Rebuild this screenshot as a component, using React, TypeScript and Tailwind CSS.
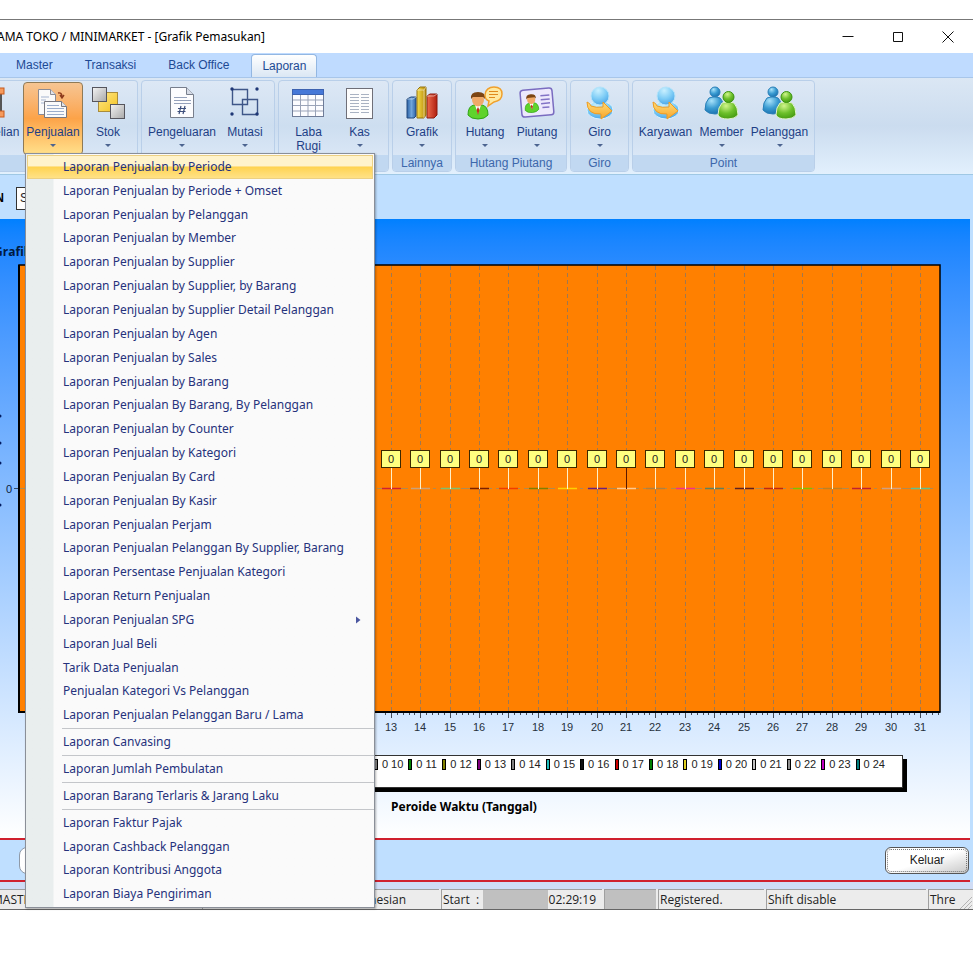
import type { ReactNode } from "react";
import clsx from "clsx";

const TABS = ["Master", "Transaksi", "Back Office"];

const MENU_SECTIONS = [
  [
    "Laporan Penjualan by Periode",
    "Laporan Penjualan by Periode + Omset",
    "Laporan Penjualan by Pelanggan",
    "Laporan Penjualan by Member",
    "Laporan Penjualan by Supplier",
    "Laporan Penjualan by Supplier, by Barang",
    "Laporan Penjualan by Supplier Detail Pelanggan",
    "Laporan Penjualan by Agen",
    "Laporan Penjualan by Sales",
    "Laporan Penjualan by Barang",
    "Laporan Penjualan By Barang, By Pelanggan",
    "Laporan Penjualan by Counter",
    "Laporan Penjualan by Kategori",
    "Laporan Penjualan By Card",
    "Laporan Penjualan By Kasir",
    "Laporan Penjualan Perjam",
    "Laporan Penjualan Pelanggan By Supplier, Barang",
    "Laporan Persentase Penjualan Kategori",
    "Laporan Return Penjualan",
    "Laporan Penjualan SPG",
    "Laporan Jual Beli",
    "Tarik Data Penjualan",
    "Penjualan Kategori Vs Pelanggan",
    "Laporan Penjualan Pelanggan Baru / Lama",
  ],
  ["Laporan Canvasing"],
  ["Laporan Jumlah Pembulatan"],
  ["Laporan Barang Terlaris & Jarang Laku"],
  [
    "Laporan Faktur Pajak",
    "Laporan Cashback Pelanggan",
    "Laporan Kontribusi Anggota",
    "Laporan Biaya Pengiriman",
  ],
];

const DAYS = Array.from({ length: 19 }, (_, i) => i + 13);
const DAY_COLORS = [
  "#d02030", "#c9a27a", "#7fc070", "#7a2000", "#f03c00", "#7f8000", "#ffd000",
  "#6a2080", "#ffc890", "#b08040", "#f0308c", "#5f8060", "#602020", "#c02810",
  "#80c000", "#c08020", "#c02030", "#d0a080", "#60c090",
];

const LEGEND = [
  { day: 10, color: "#808080" },
  { day: 11, color: "#008000" },
  { day: 12, color: "#808000" },
  { day: 13, color: "#800080" },
  { day: 14, color: "#808080" },
  { day: 15, color: "#20c0c0" },
  { day: 16, color: "#101010" },
  { day: 17, color: "#d00000" },
  { day: 18, color: "#008000" },
  { day: 19, color: "#e0d020" },
  { day: 20, color: "#0000d0" },
  { day: 21, color: "#c0c0c0" },
  { day: 22, color: "#909090" },
  { day: 23, color: "#c000c0" },
  { day: 24, color: "#008080" },
];

function Icon({ children }: { children: ReactNode }) {
  return (
    <svg width="36" height="36" viewBox="0 0 36 36" className="shrink-0" aria-hidden="true">
      {children}
    </svg>
  );
}

function Defs() {
  return (
    <svg width="0" height="0" className="absolute" aria-hidden="true">
      <defs>
        <linearGradient id="silver" x1="0" y1="0" x2="1" y2="1">
          <stop offset="0" stopColor="#f4f4f4" />
          <stop offset="1" stopColor="#a8a8a8" />
        </linearGradient>
        <linearGradient id="gold" x1="0" y1="0" x2="1" y2="1">
          <stop offset="0" stopColor="#ffe88a" />
          <stop offset="1" stopColor="#f3c21e" />
        </linearGradient>
        <linearGradient id="arrow" x1="0" y1="0" x2="0" y2="1">
          <stop offset="0" stopColor="#ffdc78" />
          <stop offset="1" stopColor="#f7a428" />
        </linearGradient>
        <radialGradient id="sky" cx="0.4" cy="0.2" r="0.9">
          <stop offset="0" stopColor="#c9f0ff" />
          <stop offset="0.5" stopColor="#7fcdf6" />
          <stop offset="1" stopColor="#3f9ce4" />
        </radialGradient>
        <radialGradient id="blue" cx="0.35" cy="0.25" r="0.85">
          <stop offset="0" stopColor="#a8e2fa" />
          <stop offset="0.5" stopColor="#3a9cd2" />
          <stop offset="1" stopColor="#1568a8" />
        </radialGradient>
        <radialGradient id="green" cx="0.4" cy="0.25" r="0.85">
          <stop offset="0" stopColor="#d2f58c" />
          <stop offset="0.5" stopColor="#6cc02a" />
          <stop offset="1" stopColor="#3c920c" />
        </radialGradient>
        <linearGradient id="barBlue">
          <stop offset="0" stopColor="#2d63a6" />
          <stop offset="0.5" stopColor="#6fa5dc" />
          <stop offset="1" stopColor="#2d63a6" />
        </linearGradient>
        <linearGradient id="barGold">
          <stop offset="0" stopColor="#f5dc4a" />
          <stop offset="1" stopColor="#b88a08" />
        </linearGradient>
        <linearGradient id="barRed">
          <stop offset="0" stopColor="#ee6a4c" />
          <stop offset="1" stopColor="#b01f10" />
        </linearGradient>
      </defs>
    </svg>
  );
}

function PurchaseIcon() {
  return (
    <Icon>
      <path d="M12 6h18M12 29h18M16 6v23M28 6v23" stroke="#555" strokeWidth="2" fill="none" />
      <rect x="25" y="3" width="6" height="6" fill="#f59a5c" stroke="#c85a1c" />
      <rect x="25" y="26" width="6" height="6" fill="#f59a5c" stroke="#c85a1c" />
    </Icon>
  );
}

function SalesIcon() {
  return (
    <Icon>
      <path d="M3.500 4.500h12l5 5v20h-17z" fill="#fafafa" stroke="#8b8b94" />
      <path d="M15.500 4.500v5h5" fill="#dfe3ea" stroke="#8b8b94" />
      <path d="M6 12h8M6 15h5M6 18h3" stroke="#a5b4cf" />
      <path d="M9.500 16.500h17l5 5v11h-22z" fill="#fafafa" stroke="#77777f" />
      <path d="M26.500 16.500v5h5" fill="#dfe3ea" stroke="#77777f" />
      <path d="M12 20.500h12M12 23.500h17M12 26.500h17M12 29.500h17" stroke="#9badcb" />
      <path d="M23 8q4-1 4 4m-2-2l2 3 2-3" fill="none" stroke="#8d3a1c" strokeWidth="1.400" />
    </Icon>
  );
}

function StockIcon() {
  return (
    <Icon>
      <rect x="8.500" y="7.500" width="19" height="19" fill="url(#gold)" stroke="#a98c3c" />
      <rect x="2.500" y="2.500" width="14" height="14" fill="url(#silver)" stroke="#55555d" />
      <rect x="20.500" y="19.500" width="14" height="14" fill="url(#silver)" stroke="#55555d" />
    </Icon>
  );
}

function ExpenseIcon() {
  return (
    <Icon>
      <path d="M6.500 2.500h16l7 7v23h-23z" fill="#fcfcfe" stroke="#777e8c" />
      <path d="M22.500 2.500v7h7" fill="#d6dbe6" stroke="#777e8c" />
      <path d="M10 12.500h13M10 15.500h17M10 18.500h17" stroke="#95a1bb" />
      <path d="M17 21l-2 8M21 21l-2 8M14 23.500h8M13.500 26.500h8" stroke="#3d4f7c" strokeWidth="1.200" />
    </Icon>
  );
}

function MutationIcon() {
  return (
    <Icon>
      <path d="M5.500 4.500h15v15h-15zM15.500 14.500h15v15h-15z" fill="none" stroke="#3e5688" strokeWidth="1.400" />
      <g fill="#1f3776">
        <circle cx="5" cy="4" r="1.700" />
        <circle cx="30" cy="4" r="1.700" />
        <circle cx="5" cy="29" r="1.700" />
        <circle cx="30" cy="29" r="1.700" />
      </g>
    </Icon>
  );
}

function TableIcon() {
  return (
    <Icon>
      <rect x="1.500" y="4.500" width="31" height="27" fill="#fcfcff" stroke="#6f7c98" />
      <rect x="1.500" y="4.500" width="31" height="5" fill="#4678d8" stroke="#3c62b0" />
      <path d="M2 15h30M2 20.500h30M2 26h30M9.500 10v21M17 10v21M24.500 10v21" stroke="#9aa3b8" />
    </Icon>
  );
}

function CashIcon() {
  return (
    <Icon>
      <rect x="4.500" y="3.500" width="26" height="30" fill="#fdfdfd" stroke="#6f6f78" />
      <path
        d="M8 9.500h9M8 12.500h9M8 15.500h9M8 18.500h9M8 21.500h9M8 24.500h9M8 27.500h9M19 9.500h8M19 12.500h8M19 15.500h8M19 18.500h8M19 21.500h8M19 24.500h8M19 27.500h8"
        stroke="#a9b2c2"
      />
    </Icon>
  );
}

function ChartIcon() {
  return (
    <Icon>
      <path d="M3 14l4-2h5v19l-2 2H3z" fill="url(#barBlue)" stroke="#23497c" />
      <path d="M23 11l3-2h7v21l-3 3h-7z" fill="url(#barRed)" stroke="#8a1a0e" />
      <path d="M13 5l3-3h6v28l-2 3h-7z" fill="url(#barGold)" stroke="#93710c" />
      <path d="M13 5h7l2-3M20 5v28M3 14h6l3-2M23 11h7l3-2" fill="none" stroke="#fff" strokeOpacity="0.5" />
    </Icon>
  );
}

function Person() {
  return (
    <>
      <path d="M1 30q0-9 6-10h8q6 1 6 10-3 4-10 4T1 30z" fill="#5fd32c" stroke="#2fa414" />
      <path d="M8 20l3 9 3-9z" fill="#fff" />
      <path d="M11 22l-1.500 3L11 30l1.500-5z" fill="#c22a1c" />
      <ellipse cx="11" cy="15" rx="6" ry="6.500" fill="#f0a968" />
      <path d="M4 14q-1-7 7-7t7 7l-2-2H6z" fill="#7c4513" />
    </>
  );
}

function DebtIcon() {
  return (
    <Icon>
      <Person />
      <path
        d="M27 2c5 0 8 2 8 7 0 4-3 7-8 8l-6 4 1-5c-3-1-4-3-4-6 0-5 4-8 9-8z"
        fill="#ffe9a0"
        stroke="#f0a02c"
        strokeWidth="1.500"
      />
      <path d="M22 6.500h9M22 9.500h9M22 12.500h6" stroke="#e08a1c" />
    </Icon>
  );
}

function ReceivableIcon() {
  return (
    <Icon>
      <g transform="rotate(-5 18 18)">
        <rect x="2" y="4" width="32" height="27" rx="3" fill="#ece9fc" stroke="#7a6cc0" strokeWidth="1.500" />
        <g transform="translate(5 4) scale(0.680)">
          <Person />
        </g>
        <path d="M22 11h9M22 15h9M22 19h9M23 23h7" stroke="#8274c6" strokeWidth="1.500" />
      </g>
    </Icon>
  );
}

function ExchangeIcon() {
  return (
    <Icon>
      <ellipse cx="18" cy="25" rx="13" ry="9" fill="url(#sky)" stroke="#d8f1ff" />
      <circle cx="18" cy="11" r="9" fill="url(#sky)" stroke="#b4e3fa" />
      <path
        d="M5 17q3 1 4 4 5 2 12 1v-5l9 9-11 8v-5Q5 30 5 17z"
        fill="url(#arrow)"
        stroke="#ee9c24"
        strokeLinejoin="round"
      />
    </Icon>
  );
}

function MembersIcon() {
  return (
    <Icon>
      <path d="M1 25q0-8 4-12 6-3 11 0 4 4 4 13-3 3-9 3-7 0-10-4z" fill="url(#blue)" stroke="#2a80b8" />
      <circle cx="11" cy="7" r="5" fill="url(#blue)" stroke="#2a80b8" />
      <path d="M14 30q0-8 4-12 6-3 12 0 4 4 4 12-3 4-10 4-8 0-10-4z" fill="url(#green)" stroke="#e0f2cc" />
      <circle cx="24.500" cy="12" r="5.500" fill="url(#green)" stroke="#3c9410" />
    </Icon>
  );
}

type RibbonButtonProps = {
  label: string;
  width: string;
  icon: ReactNode;
  active?: boolean;
  arrow?: boolean;
};

function RibbonButton({ label, width, icon, active, arrow = true }: RibbonButtonProps) {
  return (
    <button
      className={clsx(
        "flex shrink-0 flex-col items-center rounded-sm border pt-[2px] text-xs leading-[14px] text-[#1e3f86]",
        width,
        active
          ? "border-[#8f7a56] bg-linear-to-b from-[#f6c592] via-[#fca348] to-[#ffe08a]"
          : "border-transparent",
      )}
    >
      {icon}
      <span className="mt-[4px]">{label}</span>
      {arrow && (
        <svg width="6" height="4" viewBox="0 0 6 4" className="mt-[5px]" aria-hidden="true">
          <path d="M0 0h6L3 3z" fill="#4c6490" />
        </svg>
      )}
    </button>
  );
}

type RibbonGroupProps = { title?: string; width: string; end?: boolean; children: ReactNode };

function RibbonGroup({ title, width, end, children }: RibbonGroupProps) {
  return (
    <div
      className={clsx(
        "flex h-[92px] shrink-0 flex-col overflow-hidden border border-[#b9cfe9] bg-linear-to-b from-[#dde8f5] via-[#cddef0] to-[#e0ebf9]",
        end ? "rounded-r-sm border-l-0" : "rounded-sm",
        width,
      )}
    >
      <div className={clsx("flex min-h-0 flex-1 pt-px", end ? "justify-end pr-1" : "justify-center")}>
        {children}
      </div>
      <div className="h-4 bg-[#c1d8f1] text-center text-xs leading-4 text-[#3c67ab]">{title}</div>
    </div>
  );
}

function Ribbon() {
  return (
    <div className="flex h-[98px] gap-[3px] overflow-hidden border-y border-t-[#a8c6ea] border-b-[#9fc8e4] bg-linear-to-b from-[#dbe7f4] via-[#cbdcef] to-[#e2f0fd] pt-[2px]">
      <RibbonGroup width="w-[138px]" end>
        <RibbonButton label="Pembelian" width="w-[64px]" icon={<PurchaseIcon />} />
        <RibbonButton label="Penjualan" width="w-[60px]" icon={<SalesIcon />} active />
        <RibbonButton label="Stok" width="w-[50px]" icon={<StockIcon />} />
      </RibbonGroup>
      <RibbonGroup width="w-[134px]">
        <RibbonButton label="Pengeluaran" width="w-[74px]" icon={<ExpenseIcon />} />
        <RibbonButton label="Mutasi" width="w-[52px]" icon={<MutationIcon />} />
      </RibbonGroup>
      <RibbonGroup width="w-[111px]">
        <RibbonButton label="Laba Rugi" width="w-[52px]" icon={<TableIcon />} arrow={false} />
        <RibbonButton label="Kas" width="w-[50px]" icon={<CashIcon />} />
      </RibbonGroup>
      <RibbonGroup title="Lainnya" width="w-[60px]">
        <RibbonButton label="Grafik" width="w-[52px]" icon={<ChartIcon />} />
      </RibbonGroup>
      <RibbonGroup title="Hutang Piutang" width="w-[112px]">
        <RibbonButton label="Hutang" width="w-[52px]" icon={<DebtIcon />} />
        <RibbonButton label="Piutang" width="w-[52px]" icon={<ReceivableIcon />} />
      </RibbonGroup>
      <RibbonGroup title="Giro" width="w-[59px]">
        <RibbonButton label="Giro" width="w-[52px]" icon={<ExchangeIcon />} />
      </RibbonGroup>
      <RibbonGroup title="Point" width="w-[183px]">
        <RibbonButton label="Karyawan" width="w-[58px]" icon={<ExchangeIcon />} arrow={false} />
        <RibbonButton label="Member" width="w-[54px]" icon={<MembersIcon />} />
        <RibbonButton label="Pelanggan" width="w-[62px]" icon={<MembersIcon />} />
      </RibbonGroup>
    </div>
  );
}

function TitleBar() {
  return (
    <header className="flex h-[33px] items-center justify-between bg-white font-['Noto_Sans',sans-serif]">
      <h1 className="-ml-[3px] text-xs whitespace-nowrap text-black">
        AMA TOKO / MINIMARKET - [Grafik Pemasukan]
      </h1>
      <div className="flex shrink-0">
        <button aria-label="Minimize" className="flex h-8 w-[50px] items-center justify-center">
          <svg width="12" height="12" viewBox="0 0 12 12">
            <path d="M0.500 5.500h11" stroke="#111" />
          </svg>
        </button>
        <button aria-label="Maximize" className="flex h-8 w-[50px] items-center justify-center">
          <svg width="12" height="12" viewBox="0 0 12 12">
            <path d="M1.500 1.500h9v9h-9z" fill="none" stroke="#111" />
          </svg>
        </button>
        <button aria-label="Close" className="flex h-8 w-[50px] items-center justify-center">
          <svg width="12" height="12" viewBox="0 0 12 12">
            <path d="M0.500 0.500l11 11M11.500 0.500l-11 11" stroke="#111" />
          </svg>
        </button>
      </div>
    </header>
  );
}

function ReportMenu() {
  return (
    <div
      role="menu"
      className="absolute top-[153px] left-[25px] flex h-[755px] w-[350px] flex-col border border-[#8a8f98] bg-[#fafafa] bg-linear-to-r from-[#e9eeee] from-[27px] to-[#fafafa] to-[28px] py-px font-['Noto_Sans',sans-serif] shadow-[1px_1px_2px_rgba(0,0,0,0.3)]"
    >
      {MENU_SECTIONS.map((section, index) => (
        <div key={section[0]} className="contents">
          {index > 0 && (
            <div role="separator" className="ml-9 flex h-[3px] items-center">
              <div className="h-px w-full bg-[#c4c6ca]" />
            </div>
          )}
          {section.map((label, i) => (
            <button
              key={label}
              role="menuitem"
              className={clsx(
                "mx-px flex min-h-0 flex-1 items-center justify-between pr-3 pl-9 text-left text-xs leading-4 whitespace-nowrap text-[#26327c]",
                index === 0 &&
                  i === 0 &&
                  "bg-linear-to-b from-[#fff3cb] from-45% via-[#ffd34e] via-50% to-[#ffe38a] shadow-[inset_0_0_0_1px_#ecd083]",
              )}
            >
              {label}
              {label === "Laporan Penjualan SPG" && (
                <svg width="5" height="8" viewBox="0 0 5 8" aria-hidden="true">
                  <path d="M0 0.500L4.500 4 0 7.500z" fill="#4b57a0" />
                </svg>
              )}
            </button>
          ))}
        </div>
      ))}
    </div>
  );
}

const dayX = (day: number) => Math.round(38 + (day - 1) * 29.4);

function Plot() {
  return (
    <svg viewBox="0 0 970 522" className="block w-full" fontFamily="'Liberation Sans', sans-serif" fontSize="11">
      <text x="-6" y="37" fontSize="12" fontWeight="bold" fontFamily="'Open Sans', sans-serif" fill="#001a40">
        Grafik
      </text>
      <g fill="#001a60">
        <circle cx="0" cy="197" r="1.500" />
        <circle cx="0" cy="224" r="1.500" />
        <circle cx="0" cy="244" r="1.500" />
        <circle cx="0" cy="286" r="1.500" />
      </g>
      <text x="6" y="274" fill="#0b2242">
        0
      </text>
      <path d="M14 269.500h5" stroke="#334a66" />
      <rect x="19" y="46" width="921" height="447" fill="#ff8000" stroke="#000" strokeWidth="1.500" />
      <path d="M19 46v447h921" fill="none" stroke="#000" strokeWidth="2" />
      <path d="M20 269.500h917" stroke="#b08a50" strokeDasharray="10 4 3 4" />
      {DAYS.map((day, i) => {
        const x = dayX(day);
        return (
          <g key={day}>
            <path d={`M${x + 0.5} 47v445`} stroke="#a07850" strokeDasharray="4 3" />
            <path d={`M${x - 9} 269.500h19`} stroke={DAY_COLORS[i]} strokeWidth="1.500" />
            <path d={`M${x + 0.5} 249v21`} stroke={day === 21 ? "#5a1800" : "#fff0c8"} />
            <rect x={x - 9.5} y="231.500" width="19" height="17" fill="#ffff80" stroke="#3c2800" />
            <text x={x} y="244" textAnchor="middle" fill="#222">
              0
            </text>
            <path
              d={`M${x + 0.5} 494v5M${x + 6.5} 494v2M${x + 12.5} 494v2M${x + 18.5} 494v2M${x - 5.5} 494v2`}
              stroke="#444c58"
            />
            <text x={x} y="512" textAnchor="middle" fill="#26303c">
              {day}
            </text>
          </g>
        );
      })}
    </svg>
  );
}

function ChartPanel() {
  return (
    <section className="mr-[3px] flex h-[619px] flex-col overflow-hidden bg-linear-to-b from-[#0080ff] to-white">
      <Plot />
      <ul className="mt-[14px] mr-[67px] ml-[60px] flex h-[33px] justify-end border border-[#333] bg-white pt-[2px] pr-3 text-[11px] leading-3 text-[#222] shadow-[4px_4px_0_#000]">
        {LEGEND.map((entry) => (
          <li key={entry.day} className="flex min-w-[34px] flex-none gap-1 pr-[5px] whitespace-nowrap">
            <span className="mt-px h-[11px] w-1 shrink-0 border border-black" style={{ background: entry.color }} />
            0 {entry.day}
          </li>
        ))}
      </ul>
      <p className="mt-[11px] pr-[42px] text-center font-['Noto_Sans',sans-serif] text-xs leading-4 font-bold text-black">
        Peroide Waktu (Tanggal)
      </p>
    </section>
  );
}

function StatusCell({ className, children }: { className?: string; children?: ReactNode }) {
  return (
    <div
      className={clsx(
        "flex shrink-0 items-center overflow-hidden border-t border-l border-[#a0a0a0] px-px whitespace-nowrap",
        className,
      )}
    >
      {children}
    </div>
  );
}

function StatusBar() {
  return (
    <footer className="flex h-[21px] gap-[2px] overflow-hidden border-b border-[#666] bg-[#ececec] font-['Open_Sans',sans-serif] text-xs text-[#222]">
      <StatusCell className="w-[200px] border-l-0">
        <span className="-ml-[9px]">MASTER</span>
      </StatusCell>
      <StatusCell className="w-[237px] justify-end pr-[33px]">Indonesian</StatusCell>
      <StatusCell className="w-[161px] justify-between pr-[6px]">
        <span className="w-10">Start&nbsp; :</span>
        <span className="mr-px h-full flex-1 bg-[#c0c0c0]" />
        02:29:19
      </StatusCell>
      <StatusCell className="w-[52px] bg-[#c0c0c0]" />
      <StatusCell className="w-[106px]">Registered.</StatusCell>
      <StatusCell className="w-[160px]">Shift disable</StatusCell>
      <StatusCell className="min-w-0 flex-1 shrink justify-between">
        Thre
        <svg width="12" height="12" viewBox="0 0 12 12" className="shrink-0 self-end" aria-hidden="true">
          <path d="M0 12L12 0M4 12l8-8M8 12l4-4" stroke="#b4b4b4" />
        </svg>
      </StatusCell>
    </footer>
  );
}

export default function App() {
  return (
    <div className="relative min-h-screen overflow-hidden bg-white pt-[19px] font-['Liberation_Sans',sans-serif]">
      <Defs />
      <div className="border-t border-[#777] bg-[#bfdfff]">
        <TitleBar />
        <nav className="flex h-[24px] items-end bg-[#bfdbff] text-xs text-[#1e4a94]">
          {TABS.map((tab) => (
            <button key={tab} className="h-6 px-4">
              {tab}
            </button>
          ))}
          <button className="ml-[6px] h-[23px] rounded-t-sm border border-b-0 border-[#93b7e2] bg-linear-to-b from-white to-[#dbe7f4] px-[10px]">
            Laporan
          </button>
        </nav>
        <Ribbon />
        <div className="flex h-[44px] items-center gap-[12px] pt-[2px]">
          <label htmlFor="periode" className="flex w-1 justify-end overflow-hidden text-xs font-bold text-black">
            N
          </label>
          <select
            id="periode"
            className="h-[23px] w-[200px] appearance-none border border-[#333] bg-white px-[3px] text-xs text-[#222]"
          >
            <option>S</option>
          </select>
        </div>
        <ChartPanel />
        <div className="mr-[3px] flex h-[44px] items-center justify-between border-y-2 border-[#d0202e] pl-[19px]">
          <button aria-label="Cetak" className="h-[27px] w-[84px] rounded-lg border border-[#8f9aa8] bg-white" />
          <button className="mr-px h-[27px] w-[84px] rounded-md border border-[#555] bg-linear-to-br from-white from-50% to-[#c8c8c8] text-xs text-[#222] outline outline-dotted outline-[#777] -outline-offset-3">
            Keluar
          </button>
        </div>
        <div className="h-[7px] bg-[#cfdcf5]" />
        <StatusBar />
      </div>
      <ReportMenu />
    </div>
  );
}
